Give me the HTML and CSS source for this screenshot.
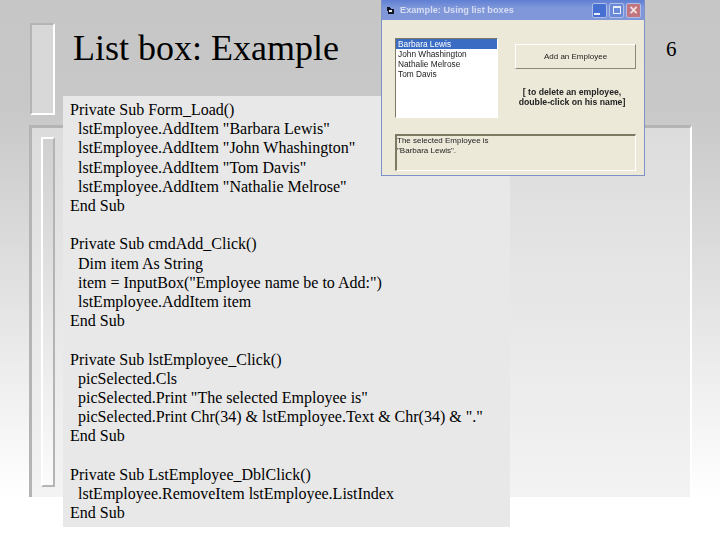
FILE: index.html
```html
<!DOCTYPE html>
<html lang="en">
<head>
<meta charset="utf-8">
<title>List box: Example</title>
<link rel="stylesheet" href="styles.css">
</head>
<body>
<div class="slide">
  <div class="deco deco-tab"></div>
  <div class="deco deco-frame"></div>
  <div class="deco deco-inner"></div>
  <h1 class="title">List box: Example</h1>
  <div class="page-num">6</div>
  <pre class="code">Private Sub Form_Load()
  lstEmployee.AddItem "Barbara Lewis"
  lstEmployee.AddItem "John Whashington"
  lstEmployee.AddItem "Tom Davis"
  lstEmployee.AddItem "Nathalie Melrose"
End Sub

Private Sub cmdAdd_Click()
  Dim item As String
  item = InputBox("Employee name be to Add:")
  lstEmployee.AddItem item
End Sub

Private Sub lstEmployee_Click()
  picSelected.Cls
  picSelected.Print "The selected Employee is"
  picSelected.Print Chr(34) &amp; lstEmployee.Text &amp; Chr(34) &amp; "."
End Sub

Private Sub LstEmployee_DblClick()
  lstEmployee.RemoveItem lstEmployee.ListIndex
End Sub</pre>
  <div class="window">
    <div class="titlebar">
      <svg class="app-icon" width="9" height="9" viewBox="0 0 9 9"><path d="M1 1h3v1h1v1h3v5H2V5H1z" fill="#10141f"/><rect x="3" y="4" width="3" height="2" fill="#e8ecf8"/></svg>
      <span class="title-text">Example: Using list boxes</span>
      <span class="tb-btn tb-min"><i class="glyph-min"></i></span>
      <span class="tb-btn tb-max"><i class="glyph-max"></i></span>
      <span class="tb-btn tb-close">×</span>
    </div>
    <div class="client">
      <div class="upper">
        <ul class="listbox">
          <li class="selected">Barbara Lewis</li>
          <li>John Whashington</li>
          <li>Nathalie Melrose</li>
          <li>Tom Davis</li>
        </ul>
        <div class="side">
          <div class="cmd-btn">Add an Employee</div>
          <p class="note">[ to delete an employee,<br>double-click on his name]</p>
        </div>
      </div>
      <div class="picbox">The selected Employee is<br>"Barbara Lewis".</div>
    </div>
  </div>
</div>
</body>
</html>
```
FILE: styles.css
```css
* { box-sizing: border-box; }
html, body { margin: 0; padding: 0; }
body { width: 720px; height: 540px; overflow: hidden; }
.slide {
  position: relative;
  width: 720px;
  height: 540px;
  background: linear-gradient(180deg, #c6c6c6 0, #c8c8c8 20%, #ffffff 92%);
  font-family: "Liberation Serif", serif;
  color: #000;
  overflow: hidden;
}
.deco { position: absolute; }
.deco-tab {
  left: 30px; top: 23px; width: 25px; height: 92px;
  background: #d8d8d8;
  border: 2px solid;
  border-color: #b4b4b4 #fff #fff #b4b4b4;
}
.deco-frame {
  left: 29px; top: 125px; width: 663px; height: 372px;
  background: linear-gradient(180deg, #dcdcdc 0, #f3f3f3 100%);
  border: solid;
  border-width: 3px 2px 0 3px;
  border-color: #b4b4b4 #fff #fff #b4b4b4;
}
.deco-inner {
  left: 41px; top: 137px; width: 14px; height: 350px;
  background: linear-gradient(180deg, #d0d0d0 0, #fbfbfb 100%);
  border: 2px solid;
  border-color: #fff #b4b4b4 #b4b4b4 #fff;
}
.title {
  position: absolute;
  left: 73px; top: 28px;
  margin: 0;
  font-size: 36px;
  font-weight: 400;
  line-height: 40px;
  white-space: nowrap;
}
.page-num {
  position: absolute;
  left: 666px; top: 37px;
  font-size: 21px;
  line-height: 24px;
}
.code {
  position: absolute;
  left: 63px; top: 96px;
  width: 447px; height: 431px;
  margin: 0;
  padding: 4px 0 0 7px;
  background: #e8e8e8;
  font-family: "Liberation Serif", serif;
  font-size: 16px;
  line-height: 19.2px;
  white-space: pre;
}
.window {
  position: absolute;
  left: 381px; top: 0;
  width: 264px; height: 176px;
  display: flex;
  flex-direction: column;
  background: #ece9d8;
  border: 1px solid #7f92c8;
  border-top: 0;
  font-family: "Liberation Sans", sans-serif;
}
.titlebar {
  height: 20px;
  flex: none;
  display: flex;
  align-items: center;
  gap: 2px;
  padding: 0 3px 0 4px;
  background: linear-gradient(180deg, #5f7fd4 0, #8098da 40%, #7f96d8 100%);
}
.app-icon { flex: none; margin-right: 3px; }
.title-text {
  flex: 1;
  color: #d5dcf2;
  font-size: 9.2px;
  font-weight: 700;
  white-space: nowrap;
  filter: blur(0.3px);
}
.tb-btn {
  width: 15px; height: 15px;
  border: 1px solid #aebce6;
  border-radius: 2px;
  display: flex;
  align-items: center;
  justify-content: center;
  color: #f3e4e6;
  font-size: 14px;
  font-weight: 700;
  line-height: 1;
}
.tb-min { background: #466fd2; }
.tb-max { background: #6a8ad8; }
.tb-close { background: #c1757f; }
.glyph-min { width: 6px; height: 2px; background: #e8eefb; margin: 8px 5px 0 0; }
.glyph-max { width: 8px; height: 8px; border: 1px solid #e8eefb; border-top-width: 2px; }
.client {
  flex: 1;
  display: flex;
  flex-direction: column;
  padding: 18px 8px 4px 13px;
  gap: 16px;
}
.upper { display: flex; gap: 17px; }
.listbox {
  list-style: none;
  margin: 0; padding: 0;
  width: 103px; height: 80px;
  flex: none;
  background: #fff;
  border: 1px solid;
  border-color: #7d7a64 #fff #fff #7d7a64;
  font-size: 8.3px;
  line-height: 10px;
  color: #222;
}
.listbox li { padding-left: 2px; filter: blur(0.3px); }
.listbox .selected { background: #3a6cc4; color: #fff; }
.side { flex: 1; display: flex; flex-direction: column; padding-top: 6px; }
.cmd-btn {
  height: 25px;
  display: flex;
  align-items: center;
  justify-content: center;
  border: 1px solid;
  border-color: #fff #8a8878 #8a8878 #fff;
  font-size: 8px;
  color: #222;
  filter: blur(0.3px);
}
.note {
  margin: 18px 0 0;
  padding-right: 7px;
  text-align: center;
  font-size: 8.7px;
  line-height: 10px;
  font-weight: 700;
  white-space: nowrap;
  color: #222;
  filter: blur(0.3px);
}
.picbox {
  height: 37px;
  border: 1px solid;
  border-color: #7d7a64 #fff #fff #7d7a64;
  border-top-width: 2px;
  border-left-width: 2px;
  font-size: 8px;
  line-height: 10px;
  color: #222;
  filter: blur(0.3px);
}
```
